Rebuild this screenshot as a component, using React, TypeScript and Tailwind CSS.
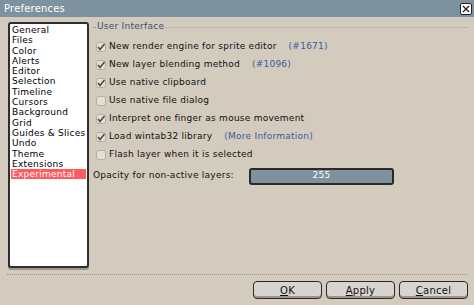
import React from 'react';

const sections = [
  'General', 'Files', 'Color', 'Alerts', 'Editor', 'Selection', 'Timeline', 'Cursors',
  'Background', 'Grid', 'Guides & Slices', 'Undo', 'Theme', 'Extensions', 'Experimental',
];

interface Option {
  label: string;
  checked: boolean;
  link?: string;
}

const options: Option[] = [
  { label: 'New render engine for sprite editor', checked: true, link: '(#1671)' },
  { label: 'New layer blending method', checked: true, link: '(#1096)' },
  { label: 'Use native clipboard', checked: true },
  { label: 'Use native file dialog', checked: false },
  { label: 'Interpret one finger as mouse movement', checked: true },
  { label: 'Load wintab32 library', checked: true, link: '(More Information)' },
  { label: 'Flash layer when it is selected', checked: false },
];

const CheckBox: React.FC<{ checked: boolean }> = ({ checked }) => (
  <svg width="10" height="10" viewBox="0 0 10 10" className="shrink-0">
    <rect x="0.5" y="0.5" width="9" height="9" rx="2" fill="#e4ded4" stroke="#b4aca0" />
    {checked && (
      <path d="M2 5 L4 7.5 L8.5 2" fill="none" stroke="#4a4a4a" strokeWidth="1.6" />
    )}
  </svg>
);

const Button: React.FC<{ first: string; rest: string }> = ({ first, rest }) => (
  <div className="w-[69px] h-[18px] rounded-[4px] border border-[#2a2a2a] bg-[#d8d4cf] shadow-[inset_0_-2px_0_#9c968e] flex items-center justify-center text-[10px] text-[#111]">
    <span className="underline underline-offset-1">{first}</span>
    <span>{rest}</span>
  </div>
);

export default function App() {
  return (
    <div className="w-[474px] h-[305px] bg-[#d3cbbe] flex flex-col font-['DejaVu_Sans',sans-serif] text-[9px] tracking-[0.25px] text-[#111] overflow-hidden">
      {/* Title bar */}
      <div className="h-[17px] bg-[#7d929e] flex items-center justify-between pl-[4px] pr-[2px] shrink-0">
        <span className="text-white text-[10px] tracking-[0.2px]">Preferences</span>
        <div className="w-[12px] h-[12px] bg-white border border-[#222] rounded-[2px] flex items-center justify-center">
          <svg width="8" height="8" viewBox="0 0 8 8">
            <path d="M1 1 L7 7 M7 1 L1 7" stroke="#222" strokeWidth="1.4" />
          </svg>
        </div>
      </div>

      <div className="flex flex-1 pl-[8px] pt-[5px] pr-[6px]">
        {/* Section list */}
        <div className="w-[81px] h-[246px] bg-white border-2 border-[#2e2e2e] rounded-[3px] shadow-[0_2px_0_#9c968e] pt-[1px] px-[1px] shrink-0">
          {sections.map((s) => (
            <div
              key={s}
              className={
                s === 'Experimental'
                  ? 'h-[10.3px] leading-[10.3px] pl-[1px] bg-[#ff5a5f] text-white'
                  : 'h-[10.3px] leading-[10.3px] pl-[1px] text-black'
              }
            >
              {s}
            </div>
          ))}
        </div>

        {/* Right panel */}
        <div className="flex-1 ml-[4px] flex flex-col">
          <div className="flex items-center h-[10px]">
            <div className="w-[3px] border-t border-dotted border-[#6b7a99]" />
            <span className="text-[#3d4d75] px-[1px]">User Interface</span>
            <div className="flex-1 border-t border-dotted border-[#a8a094] mr-[1px]" />
          </div>

          <div className="flex flex-col mt-[6px] pl-[3px]">
            {options.map((o) => (
              <div key={o.label} className="h-[18px] flex items-center gap-[3px]">
                <CheckBox checked={o.checked} />
                <span className="whitespace-nowrap">{o.label}</span>
                {o.link && <span className="ml-[9px] text-[#3b5aa0] whitespace-nowrap">{o.link}</span>}
              </div>
            ))}
          </div>

          <div className="flex items-center mt-[3px] h-[18px]">
            <span className="w-[156px] shrink-0 whitespace-nowrap text-left">Opacity for non-active layers:</span>
            <div className="w-[145px] h-[17px] shrink-0 rounded-[3px] border-2 border-[#2a2a2a] bg-[#7d929e] flex items-center justify-center text-white">
              255
            </div>
          </div>
        </div>
      </div>

      {/* Footer */}
      <div className="mx-[7px] border-t border-dotted border-[#a09888]" />
      <div className="flex justify-end gap-[4px] pr-[6px] pt-[6px] pb-[6px]">
        <Button first="O" rest="K" />
        <Button first="A" rest="pply" />
        <Button first="C" rest="ancel" />
      </div>
    </div>
  );
}
